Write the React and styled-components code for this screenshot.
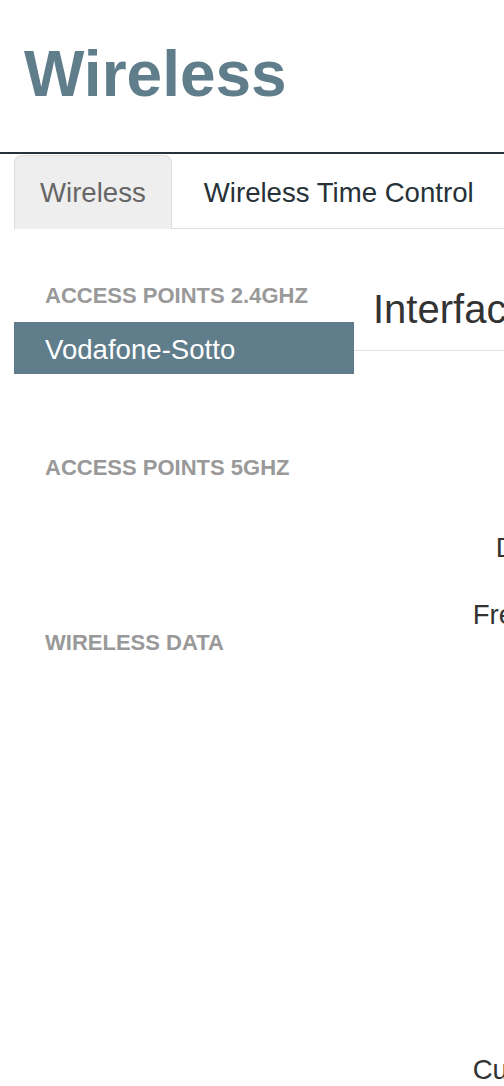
import React from "react";
import styled, { createGlobalStyle } from "styled-components";

const GlobalStyle = createGlobalStyle`
  html, body {
    margin: 0;
    padding: 0;
    overflow: hidden;
    background: #fff;
  }
  body {
    font-family: "Liberation Sans", Arial, Helvetica, sans-serif;
    font-size: 27.6px;
    color: #333;
  }
  * { box-sizing: border-box; }
`;

const Page = styled.div`
  width: 1200px;
`;

const Header = styled.header`
  height: 154px;
  padding: 39px 0 0 24px;
  border-bottom: 2px solid #263238;
`;

const Title = styled.h1`
  margin: 0;
  font-size: 64px;
  line-height: 70px;
  font-weight: 700;
  color: #607d8b;
`;

const TabList = styled.nav`
  display: flex;
  margin: 1px 0 0 14px;
  height: 74px;
  border-bottom: 1px solid #ddd;
`;

const Tab = styled.a`
  display: flex;
  align-items: center;
  height: 74px;
  margin-right: 6px;
  padding: 0 25px;
  line-height: 40px;
  border: 1px solid ${(p) => (p.$active ? "#ddd" : "transparent")};
  border-bottom: none;
  border-radius: 8px 8px 0 0;
  background: ${(p) => (p.$active ? "#eee" : "transparent")};
  color: ${(p) => (p.$active ? "#666" : "#263238")};
  white-space: nowrap;
  cursor: pointer;
`;

const Content = styled.div`
  display: grid;
  grid-template-columns: 340px 800px;
  margin-left: 14px;
  padding-top: 51px;
`;

const Sidebar = styled.aside`
  display: flex;
  flex-direction: column;
`;

const Section = styled.section`
  margin-bottom: 78px;
`;

const SectionLabel = styled.div`
  padding-left: 31px;
  margin-bottom: 10px;
  font-size: 22px;
  line-height: 32px;
  font-weight: 700;
  color: #999;
  text-transform: uppercase;
  white-space: nowrap;
`;

const ItemList = styled.ul`
  list-style: none;
  margin: 0;
  padding: 0;
  &:empty {
    min-height: 55px;
  }
`;

const Item = styled.li`
  height: 52px;
  padding: 4px 0 0 31px;
  line-height: 48px;
  background: ${(p) => (p.$selected ? "#607d8b" : "transparent")};
  color: ${(p) => (p.$selected ? "#fff" : "#333")};
  white-space: nowrap;
`;

const Main = styled.main`
  display: flex;
  flex-direction: column;
`;

const PanelTitle = styled.h2`
  margin: 7px 0 0;
  padding: 0 0 19px 19px;
  font-size: 40px;
  line-height: 44px;
  font-weight: 400;
  color: #333;
  border-bottom: 1px solid #e3e3e3;
  white-space: nowrap;
`;

const Form = styled.form`
  margin-top: 37px;
  padding-left: 19px;
`;

const Row = styled.div`
  display: grid;
  grid-template-columns: 230px 420px;
  column-gap: 20px;
  margin-bottom: 15px;
`;

const Label = styled.label`
  padding-top: 6px;
  text-align: right;
  line-height: 40px;
  color: #333;
  white-space: nowrap;
`;

const Field = styled.div`
  display: flex;
  flex-direction: column;
`;

const Input = styled.div`
  height: 52px;
  border: 1px solid #ccc;
  border-radius: 6px;
  padding: 0 16px;
  line-height: 50px;
  color: #555;
`;

const Help = styled.div`
  margin-top: 13px;
  line-height: 40px;
  color: #777;
`;

const rows = [
  { label: "Mode", value: "Access Point" },
  { label: "SSID", value: "Vodafone-Sotto" },
  { label: "Disabled", value: "No" },
  { label: "Frequency", value: "2.4 GHz" },
  { label: "Band", value: "802.11n" },
  { label: "Width", value: "20 MHz" },
  { label: "Power", value: "100%" },
  { label: "Hidden", value: "No", help: "Hide the SSID from scans" },
  { label: "Key", value: "••••••••" },
  { label: "Customize", value: "Off" },
];

export default function App() {
  return (
    <Page>
      <GlobalStyle />
      <Header>
        <Title>Wireless</Title>
      </Header>
      <TabList>
        <Tab $active>Wireless</Tab>
        <Tab>Wireless Time Control</Tab>
      </TabList>
      <Content>
        <Sidebar>
          <Section>
            <SectionLabel>Access Points 2.4GHz</SectionLabel>
            <ItemList>
              <Item $selected>Vodafone-Sotto</Item>
            </ItemList>
          </Section>
          <Section>
            <SectionLabel>Access Points 5GHz</SectionLabel>
            <ItemList />
          </Section>
          <Section>
            <SectionLabel>Wireless Data</SectionLabel>
          </Section>
        </Sidebar>
        <Main>
          <PanelTitle>Interface Configuration</PanelTitle>
          <Form>
            {rows.map((r) => (
              <Row key={r.label}>
                <Label>{r.label}</Label>
                <Field>
                  <Input>{r.value}</Input>
                  {r.help && <Help>{r.help}</Help>}
                </Field>
              </Row>
            ))}
          </Form>
        </Main>
      </Content>
    </Page>
  );
}
